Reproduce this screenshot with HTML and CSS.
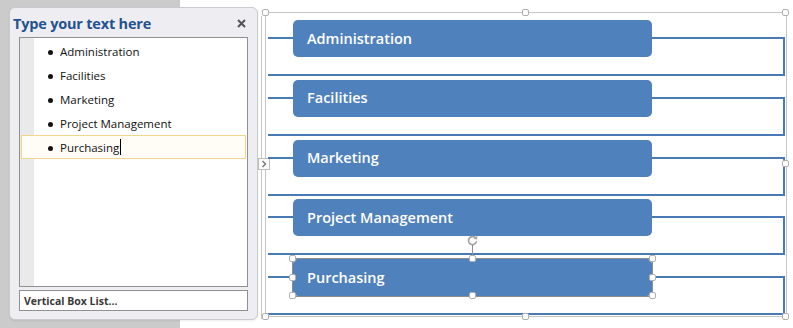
FILE: index.html
```html
<!DOCTYPE html>
<html>
<head>
<meta charset="utf-8">
<link rel="stylesheet" href="styles.css">
</head>
<body>
<div class="pane">
  <div class="pane-head">
    <span class="pane-title">Type your text here</span>
    <svg class="close" width="9" height="9" viewBox="0 0 9 9"><path d="M1 1L8 8M8 1L1 8" stroke="#555" stroke-width="2" fill="none"/></svg>
  </div>
  <div class="textbox">
    <ul class="items">
      <li class="item"><span class="dot"></span>Administration</li>
      <li class="item"><span class="dot"></span>Facilities</li>
      <li class="item"><span class="dot"></span>Marketing</li>
      <li class="item"><span class="dot"></span>Project Management</li>
      <li class="item item-active"><span class="dot"></span>Purchasing<span class="caret"></span></li>
    </ul>
  </div>
  <div class="layout-name">Vertical Box List...</div>
</div>

<div class="frame">
  <span class="expand"><svg width="6" height="8" viewBox="0 0 6 8"><path d="M1.5 1L4.5 4L1.5 7" stroke="#777" stroke-width="1.4" fill="none"/></svg></span>
  <span class="handle h-tl"></span>
  <span class="handle h-tm"></span>
  <span class="handle h-tr"></span>
  <span class="handle h-mr"></span>
  <span class="handle h-bl"></span>
  <span class="handle h-bm"></span>
  <span class="handle h-br"></span>

  <div class="row"><div class="box">Administration</div></div>
  <div class="row"><div class="box">Facilities</div></div>
  <div class="row"><div class="box">Marketing</div></div>
  <div class="row"><div class="box">Project Management</div></div>
  <div class="row row-selected">
    <div class="box">Purchasing
      <span class="sel"></span>
      <span class="rot"><svg width="13" height="13" viewBox="0 0 13 13"><path d="M10 4.6A4 4 0 1 0 10.3 8" stroke="#a3a3a3" stroke-width="1.7" fill="none" stroke-linecap="round"/><path d="M7.6 4.3L11.2 5.4L11.4 1.8Z" fill="#a3a3a3"/></svg></span>
      <span class="stem"></span>
      <span class="handle s-tl"></span>
      <span class="handle s-tm"></span>
      <span class="handle s-tr"></span>
      <span class="handle s-ml"></span>
      <span class="handle s-mr"></span>
      <span class="handle s-bl"></span>
      <span class="handle s-bm"></span>
      <span class="handle s-br"></span>
    </div>
  </div>
</div>
</body>
</html>
```

FILE: styles.css
```css
* { box-sizing: border-box; }

html, body { margin: 0; padding: 0; }

body {
  width: 793px;
  height: 328px;
  overflow: hidden;
  display: flex;
  align-items: flex-start;
  background: linear-gradient(to right, #cbcbcb 0, #cbcbcb 180px, #ffffff 180px);
  font-family: "Open Sans", "Noto Sans", sans-serif;
}

/* ---------- text pane ---------- */
.pane {
  margin: 7px 0 0 9px;
  width: 249px;
  height: 313px;
  background: #eeeef2;
  border: 1px solid #c9c9d0;
  border-radius: 6px;
  display: flex;
  flex-direction: column;
  padding: 0 9px 0 9px;
  box-shadow: 0 1px 2px rgba(0,0,0,0.08);
}

.pane-head {
  height: 29px;
  display: flex;
  align-items: center;
  justify-content: space-between;
  padding: 2px 0 0 0;
  margin-left: -6px;
}

.pane-title {
  font-weight: 700;
  font-size: 14.5px;
  color: #24528f;
  letter-spacing: -0.2px;
}

.close { margin-right: 2px; margin-top: -1px; }

.textbox {
  height: 250px;
  background: linear-gradient(to right, #eaeaea 0, #eaeaea 14px, #ffffff 14px);
  border: 1px solid #8f9091;
  padding: 1px 1px 0 1px;
}

.items {
  list-style: none;
  margin: 0;
  padding: 0;
}

.item {
  height: 24px;
  display: flex;
  align-items: center;
  padding-left: 26px;
  font-size: 11.5px;
  color: #111;
  border: 1px solid transparent;
}

.item-active {
  background: #fffdf6;
  border-color: #f1d68e;
}

.dot {
  width: 5px;
  height: 5px;
  border-radius: 50%;
  background: #111;
  margin-right: 7px;
  margin-top: 2px;
}

.caret {
  width: 1px;
  height: 16px;
  background: #000;
  margin-left: 1px;
}

.layout-name {
  margin-top: 3px;
  height: 21px;
  background: #fff;
  border: 1px solid #8f9091;
  font-size: 10.5px;
  font-weight: 700;
  color: #3a3a3a;
  padding-left: 4px;
  display: flex;
  align-items: center;
}

/* ---------- diagram ---------- */
.frame {
  position: relative;
  margin: 12px 0 0 7px;
  width: 522px;
  height: 305px;
  border: 1px solid #c6c6c6;
  padding: 7px 2px 0 2px;
  display: flex;
  flex-direction: column;
}

.frame::before {
  content: "";
  position: absolute;
  left: -5px;
  top: 3px;
  bottom: -3px;
  width: 1px;
  background: #c6c6c6;
}

.expand {
  position: absolute;
  left: -8px;
  top: 145px;
  width: 12px;
  height: 12px;
  background: #fafafa;
  border: 1px solid #bdbdbd;
  display: flex;
  align-items: center;
  justify-content: center;
}

.handle {
  position: absolute;
  width: 7px;
  height: 7px;
  background: #fff;
  border: 1px solid #b0b0b0;
  border-radius: 2px;
  z-index: 3;
}

.h-tl { left: -4px; top: -4px; }
.h-tm { left: 256px; top: -4px; }
.h-tr { left: 516px; top: -4px; }
.h-mr { left: 516px; top: 147px; }
.h-bl { left: -4px; top: 300px; }
.h-bm { left: 256px; top: 300px; }
.h-br { left: 516px; top: 300px; }

.row {
  position: relative;
  flex: 0 0 59.75px;
  height: 59.75px;
}

.row::before {
  content: "";
  position: absolute;
  left: 0;
  top: 17px;
  width: 515px;
  height: 35px;
  border-top: 2px solid #4a7ab4;
  border-right: 2px solid #4a7ab4;
  border-bottom: 2px solid #4a7ab4;
}

.box {
  position: relative;
  margin-left: 25px;
  width: 359px;
  height: 37px;
  background: #4f81bd;
  border-radius: 5px;
  color: #fff;
  font-family: "Open Sans", "Noto Sans", sans-serif;
  font-size: 14.5px;
  font-weight: 600;
  display: flex;
  align-items: center;
  padding-left: 14px;
  padding-bottom: 1px;
}

.row-selected .box { padding-bottom: 0; }

.sel {
  position: absolute;
  left: -1px;
  top: -1px;
  right: -1px;
  bottom: -1px;
  border: 1px solid #8d8d8d;
  border-radius: 1px;
}

.rot {
  position: absolute;
  left: 173px;
  top: -27px;
  width: 13px;
  height: 13px;
}

.stem {
  position: absolute;
  left: 179px;
  top: -14px;
  width: 1px;
  height: 12px;
  background: #8d8d8d;
}

.s-tl { left: -4px; top: -4px; }
.s-tm { left: 176px; top: -4px; }
.s-tr { left: 356px; top: -4px; }
.s-ml { left: -4px; top: 15px; }
.s-mr { left: 356px; top: 15px; }
.s-bl { left: -4px; top: 33px; }
.s-bm { left: 176px; top: 33px; }
.s-br { left: 356px; top: 33px; }
```
